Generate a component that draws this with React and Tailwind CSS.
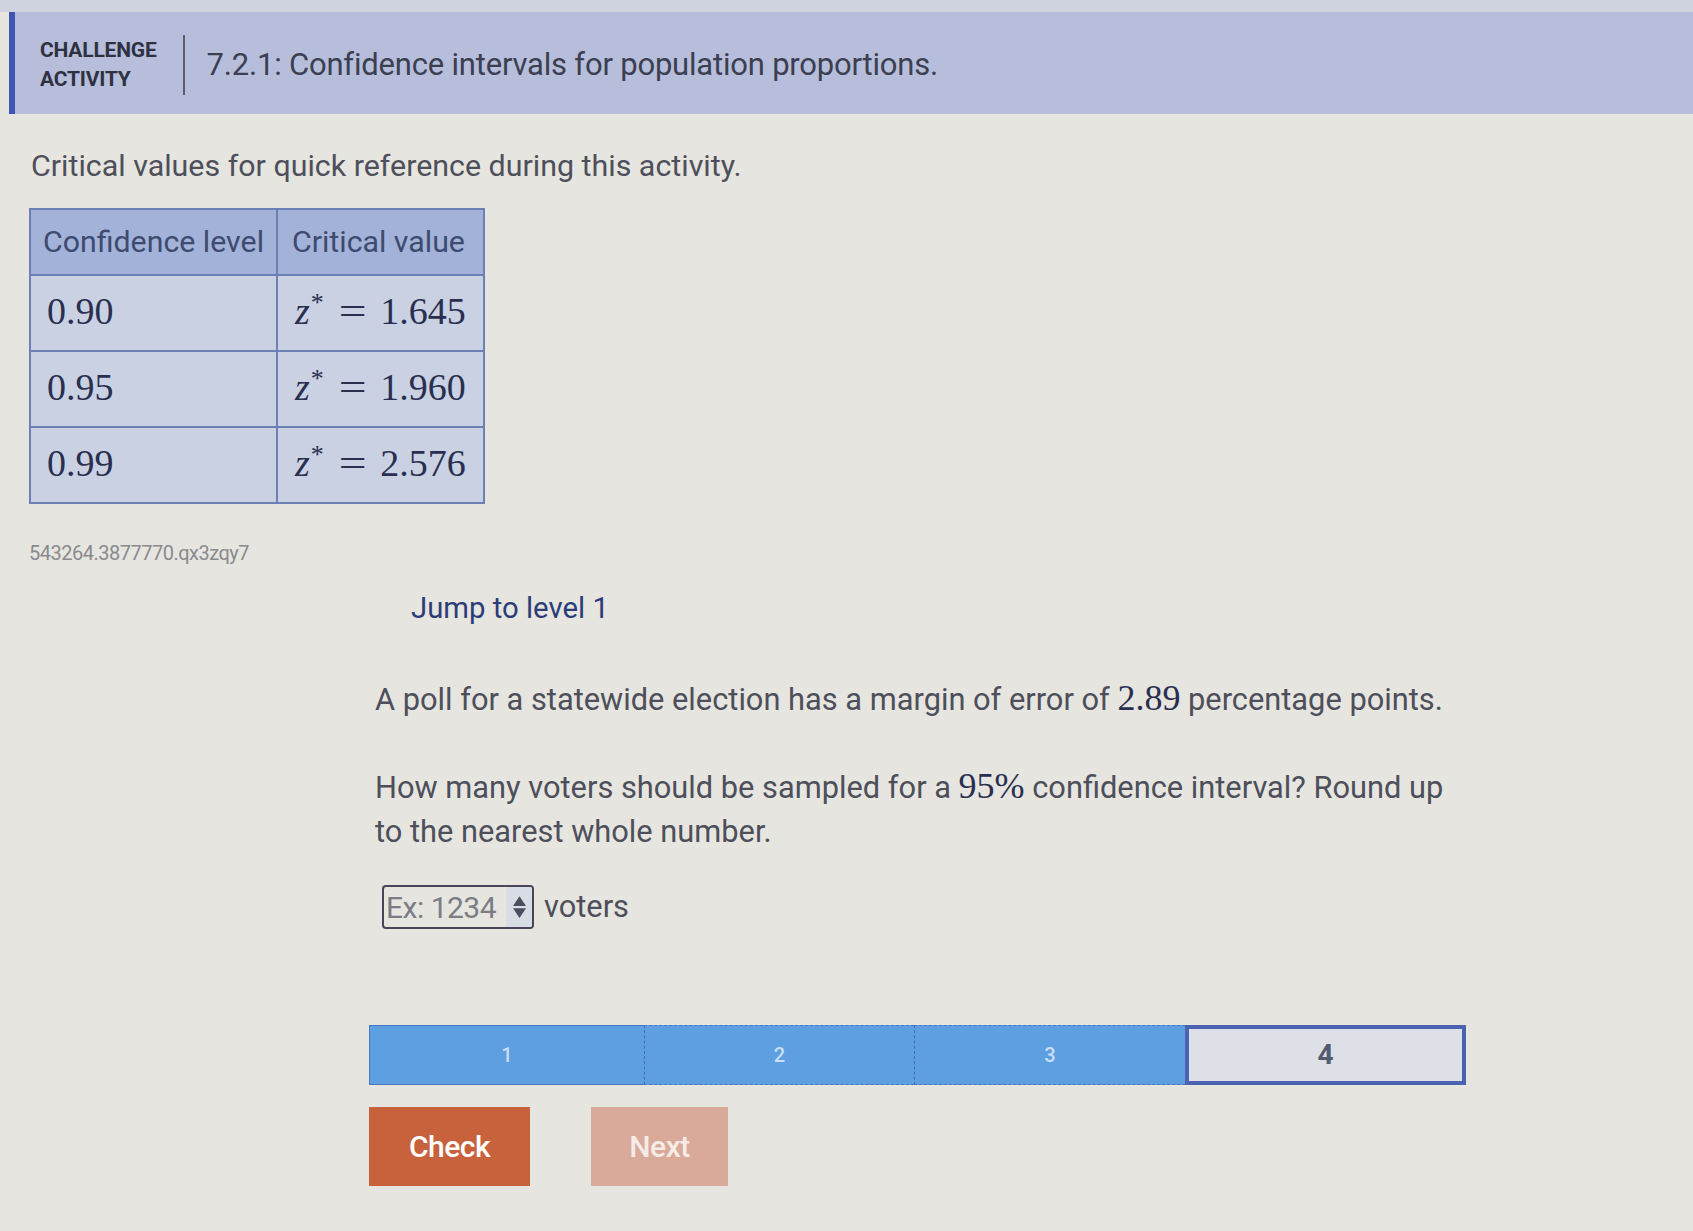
import React from "react";

const sans = { fontFamily: "Roboto, 'Noto Sans', sans-serif" };
const serif = { fontFamily: "'Liberation Serif', 'DejaVu Serif', serif" };

function Z({ v }) {
  return (
    <span className="inline-flex items-baseline" style={serif}>
      <span className="italic">z</span>
      <span className="text-[26px] relative -top-[13px] ml-[1px]">*</span>
      <span className="ml-[18px] mr-[17px] inline-block scale-x-[1.3]">=</span>
      <span>{v}</span>
    </span>
  );
}

export default function App() {
  const rows = [
    ["0.90", "1.645"],
    ["0.95", "1.960"],
    ["0.99", "2.576"],
  ];
  return (
    <div className="w-[1693px] h-[1231px] bg-[#e6e5e0] overflow-hidden" style={sans}>
      <div className="h-[12px] bg-[#cfd2df]" />
      <div className="ml-[9px] h-[102px] bg-[#b6bedb] border-l-[6px] border-[#3f55b5] flex items-center pt-[4px]">
        <div className="pl-[25px] pr-[26px] text-[21px] leading-[29px] font-bold text-[#2f3140] tracking-[-0.2px]">
          <div>CHALLENGE</div>
          <div>ACTIVITY</div>
        </div>
        <div className="w-[2px] h-[60px] bg-[#5a5d6a]" />
        <div className="pl-[22px] text-[31px] text-[#3c3f50] tracking-[-0.2px]">
          7.2.1: Confidence intervals for population proportions.
        </div>
      </div>

      <div className="pl-[31px] pt-[32px] text-[30.4px] leading-[40px] text-[#4d4f5a]">
        Critical values for quick reference during this activity.
      </div>

      <table className="ml-[29px] mt-[22px] table-fixed w-[454px] border-collapse border-[2px] border-[#6d80b6]">
        <thead>
          <tr className="h-[66px] bg-[#a2b2d8]">
            <th className="w-[247px] border-[2px] border-[#6d80b6] pl-[12px] text-left font-normal text-[30.3px] text-[#3e4a6e] whitespace-nowrap">
              Confidence level
            </th>
            <th className="w-[207px] border-[2px] border-[#6d80b6] pl-[14px] text-left font-normal text-[30.3px] text-[#3e4a6e] whitespace-nowrap">
              Critical value
            </th>
          </tr>
        </thead>
        <tbody>
          {rows.map(([a, b]) => (
            <tr key={a} className="h-[76px] bg-[#c9d1e2]">
              <td className="border-[2px] border-[#6d80b6] pl-[16px] pb-[3px] text-[38px] text-[#2a2f50]" style={serif}>
                {a}
              </td>
              <td className="border-[2px] border-[#6d80b6] pl-[17px] pb-[3px] text-[38px] text-[#2a2f50] whitespace-nowrap">
                <Z v={b} />
              </td>
            </tr>
          ))}
        </tbody>
      </table>

      <div className="pl-[29px] pt-[34px] text-[20px] text-[#8a8a8e] tracking-[-0.5px]">
        543264.3877770.qx3zqy7
      </div>

      <div className="pl-[375px]">
        <div className="pl-[36px] pt-[22px] text-[29.3px] leading-[36px] text-[#2c3c78]">Jump to level 1</div>

        <div className="pt-[52px] text-[30.8px] leading-[40px] text-[#4d4f5a] whitespace-nowrap">
          A poll for a statewide election has a margin of error of{" "}
          <span className="text-[36px] text-[#2a2f50]" style={serif}>2.89</span> percentage points.
        </div>

        <div className="pt-[44px] w-[1150px] text-[30.8px] leading-[44px] text-[#4d4f5a]">
          How many voters should be sampled for a{" "}
          <span className="text-[36px] text-[#2a2f50]" style={serif}>95%</span> confidence interval? Round up
          <br />
          to the nearest whole number.
        </div>

        <div className="pt-[30px] pl-[7px] flex items-center">
          <div className="w-[152px] h-[44px] border-[2px] border-[#4a4458] rounded-[4px] flex items-center overflow-hidden">
            <span className="flex-1 pl-[2px] text-[30px] text-[#7c7c84] tracking-[-0.5px]">Ex: 1234</span>
            <span className="w-[26px] h-full bg-[#d8dce4] flex flex-col items-center justify-center gap-[2px]">
              <svg width="13" height="10" viewBox="0 0 12 9"><path d="M6 0 L12 9 L0 9 Z" fill="#4a4f60" /></svg>
              <svg width="13" height="10" viewBox="0 0 12 9"><path d="M0 0 L12 0 L6 9 Z" fill="#4a4f60" /></svg>
            </span>
          </div>
          <span className="pl-[10px] text-[30.8px] text-[#4d4f5a]">voters</span>
        </div>

        <div className="mt-[95px] ml-[-6px] w-[1097px] h-[60px] flex">
          <div className="w-[275px] bg-[#5d9fe0] border-y border-l border-[#4a78c0] flex items-center justify-center text-[20px] font-medium text-[#c9ddf5]">1</div>
          <div className="w-[270px] bg-[#5d9fe0] border-y border-[#4a78c0] border-l border-l-[#3f6fb5] border-dashed flex items-center justify-center text-[20px] font-medium text-[#c9ddf5]">2</div>
          <div className="w-[271px] bg-[#5d9fe0] border-y border-[#4a78c0] border-l border-l-[#3f6fb5] border-dashed flex items-center justify-center text-[20px] font-medium text-[#c9ddf5]">3</div>
          <div className="flex-1 bg-[#dde0e6] border-[4px] border-[#4a62b0] flex items-center justify-center text-[28px] font-bold text-[#555a70]">4</div>
        </div>

        <div className="mt-[22px] ml-[-6px] flex gap-[61px]">
          <div className="w-[161px] h-[79px] bg-[#c8623d] flex items-center justify-center text-[30px] font-medium text-white tracking-[-0.5px]">Check</div>
          <div className="w-[137px] h-[79px] bg-[#d9a999] flex items-center justify-center text-[30px] font-medium text-[#f6ebe6] tracking-[-0.5px]">Next</div>
        </div>
      </div>
    </div>
  );
}
